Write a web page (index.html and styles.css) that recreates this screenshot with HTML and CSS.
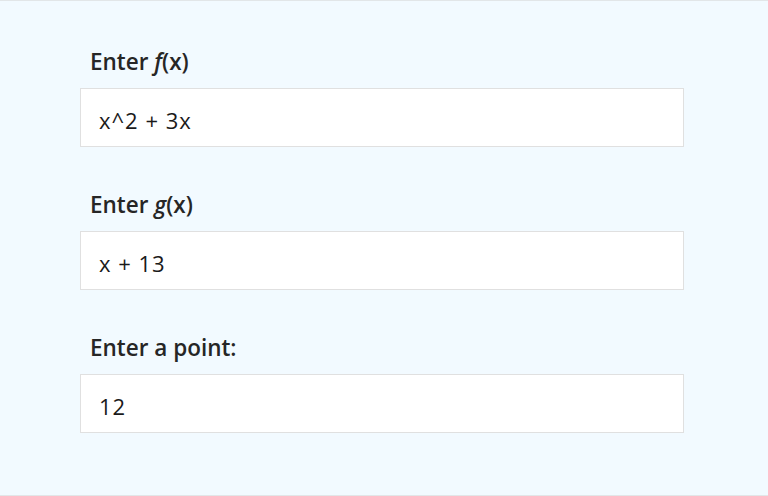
FILE: index.html
```html
<!DOCTYPE html>
<html>
<head>
<meta charset="utf-8">
<link rel="stylesheet" href="styles.css">
</head>
<body>
<div class="panel">
  <form class="form">
    <div class="field">
      <label class="label" for="f">Enter <i>f</i>(x)</label>
      <input class="input" id="f" type="text" value="x^2 + 3x">
    </div>
    <div class="field">
      <label class="label" for="g">Enter <i>g</i>(x)</label>
      <input class="input" id="g" type="text" value="x + 13">
    </div>
    <div class="field">
      <label class="label" for="p">Enter a point:</label>
      <input class="input" id="p" type="text" value="12">
    </div>
  </form>
</div>
</body>
</html>
```
FILE: styles.css
```css
html, body {
  margin: 0;
  padding: 0;
}
body {
  background: #f2faff;
  font-family: "Open Sans", "Noto Sans", sans-serif;
  color: #222;
}
.panel {
  box-sizing: border-box;
  height: 496px;
  border-top: 1px solid #e2e6e8;
  border-bottom: 1px solid #e2e6e8;
  background: #f2faff;
}
.form {
  display: flex;
  flex-direction: column;
  gap: 43px;
  padding: 46px 0 0 80px;
  width: 604px;
}
.field {
  display: flex;
  flex-direction: column;
  gap: 11px;
}
.label {
  display: block;
  padding-left: 10px;
  font-family: "Open Sans", "Noto Sans", sans-serif;
  font-size: 22.5px;
  line-height: 30px;
  font-weight: 600;
  color: #262626;
}
.label i {
  font-family: "Open Sans", "Noto Sans", sans-serif;
  font-style: italic;
  font-weight: 600;
}
.input {
  box-sizing: border-box;
  width: 604px;
  height: 59px;
  margin: 0;
  padding: 5px 0 0 18px;
  border: 1.5px solid #e0e0e0;
  background: #fff;
  font-family: "Open Sans", "Noto Sans", sans-serif;
  font-size: 22px;
  letter-spacing: 1px;
  color: #1a1a1a;
  outline: none;
}
```
